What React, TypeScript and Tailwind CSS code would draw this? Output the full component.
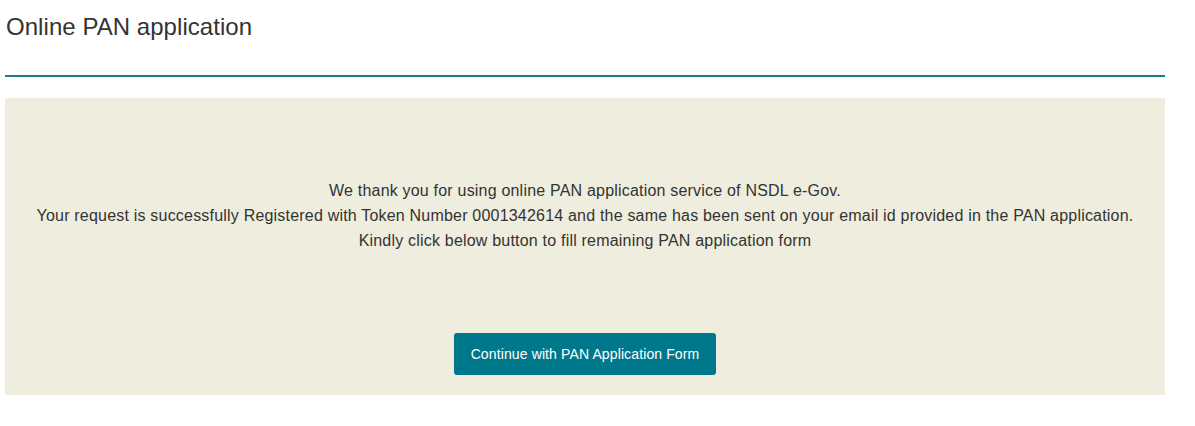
export default function App() {
  return (
    <div className="min-h-[426px] bg-white" style={{ fontFamily: '"Liberation Sans", Arial, sans-serif' }}>
      <div className="ml-[5px] w-[1160px]">
        <div className="pt-[13px] pb-[35px] border-b-2 border-[#1a7a8c]">
          <h1 className="pl-[1px] text-[24px] leading-[27px] text-[#333333] font-normal tracking-[0.05px]">Online PAN application</h1>
        </div>
        <div className="mt-[21px] bg-[#efeddd] pt-[80px] pb-[20px] flex flex-col items-center">
          <div className="text-[16px] leading-[25px] tracking-[0.2px] text-[#333333] text-center">
            <p>We thank you for using online PAN application service of NSDL e-Gov.</p>
            <p>Your request is successfully Registered with Token Number 0001342614 and the same has been sent on your email id provided in the PAN application.</p>
            <p>Kindly click below button to fill remaining PAN application form</p>
          </div>
          <button className="mt-[80px] h-[42px] px-[17px] rounded-[3px] bg-[#00788c] text-white text-[14px] leading-[20px] tracking-[0.12px] flex items-center">
            Continue with PAN Application Form
          </button>
        </div>
      </div>
    </div>
  );
}
